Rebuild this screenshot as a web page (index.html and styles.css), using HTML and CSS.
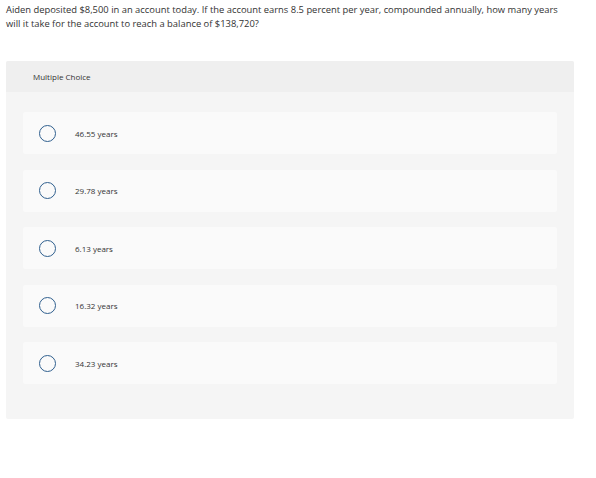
FILE: index.html
```html
<!DOCTYPE html>
<html>
<head>
<meta charset="utf-8">
<link rel="stylesheet" href="styles.css">
</head>
<body>
<p class="question">Aiden deposited $8,500 in an account today. If the account earns 8.5 percent per year, compounded annually, how many years will it take for the account to reach a balance of $138,720?</p>
<div class="panel">
  <div class="panel-head">Multiple Choice</div>
  <div class="panel-body">
    <div class="option"><span class="radio"></span><span class="label">46.55 years</span></div>
    <div class="option"><span class="radio"></span><span class="label">29.78 years</span></div>
    <div class="option"><span class="radio"></span><span class="label">6.13 years</span></div>
    <div class="option"><span class="radio"></span><span class="label">16.32 years</span></div>
    <div class="option"><span class="radio"></span><span class="label">34.23 years</span></div>
  </div>
</div>
</body>
</html>
```
FILE: styles.css
```css
* { box-sizing: border-box; }
body {
  margin: 0;
  background: #fff;
  font-family: "Open Sans", "Liberation Sans", sans-serif;
  color: #333;
}
.question {
  margin: 0;
  padding: 3px 0 0 6px;
  font-size: 9.4px;
  line-height: 14px;
  width: 566px;
}
.panel {
  margin: 30px 0 0 6px;
  width: 568px;
  background: #f5f5f5;
  border-radius: 2px;
}
.panel-head {
  height: 31px;
  background: #efefef;
  padding-left: 27px;
  display: flex;
  align-items: center;
  font-size: 8px;
  border-radius: 2px 2px 0 0;
}
.panel-body {
  padding: 20px 17px 35px 17px;
  display: flex;
  flex-direction: column;
  gap: 15.5px;
}
.option {
  height: 42px;
  background: #fafafa;
  border-radius: 2px;
  display: flex;
  align-items: center;
  padding-left: 16px;
}
.radio {
  width: 17px;
  height: 17px;
  border: 1.5px solid #2f5f8e;
  border-radius: 50%;
  flex: none;
}
.label {
  margin-left: 19px;
  font-size: 8px;
}
```
